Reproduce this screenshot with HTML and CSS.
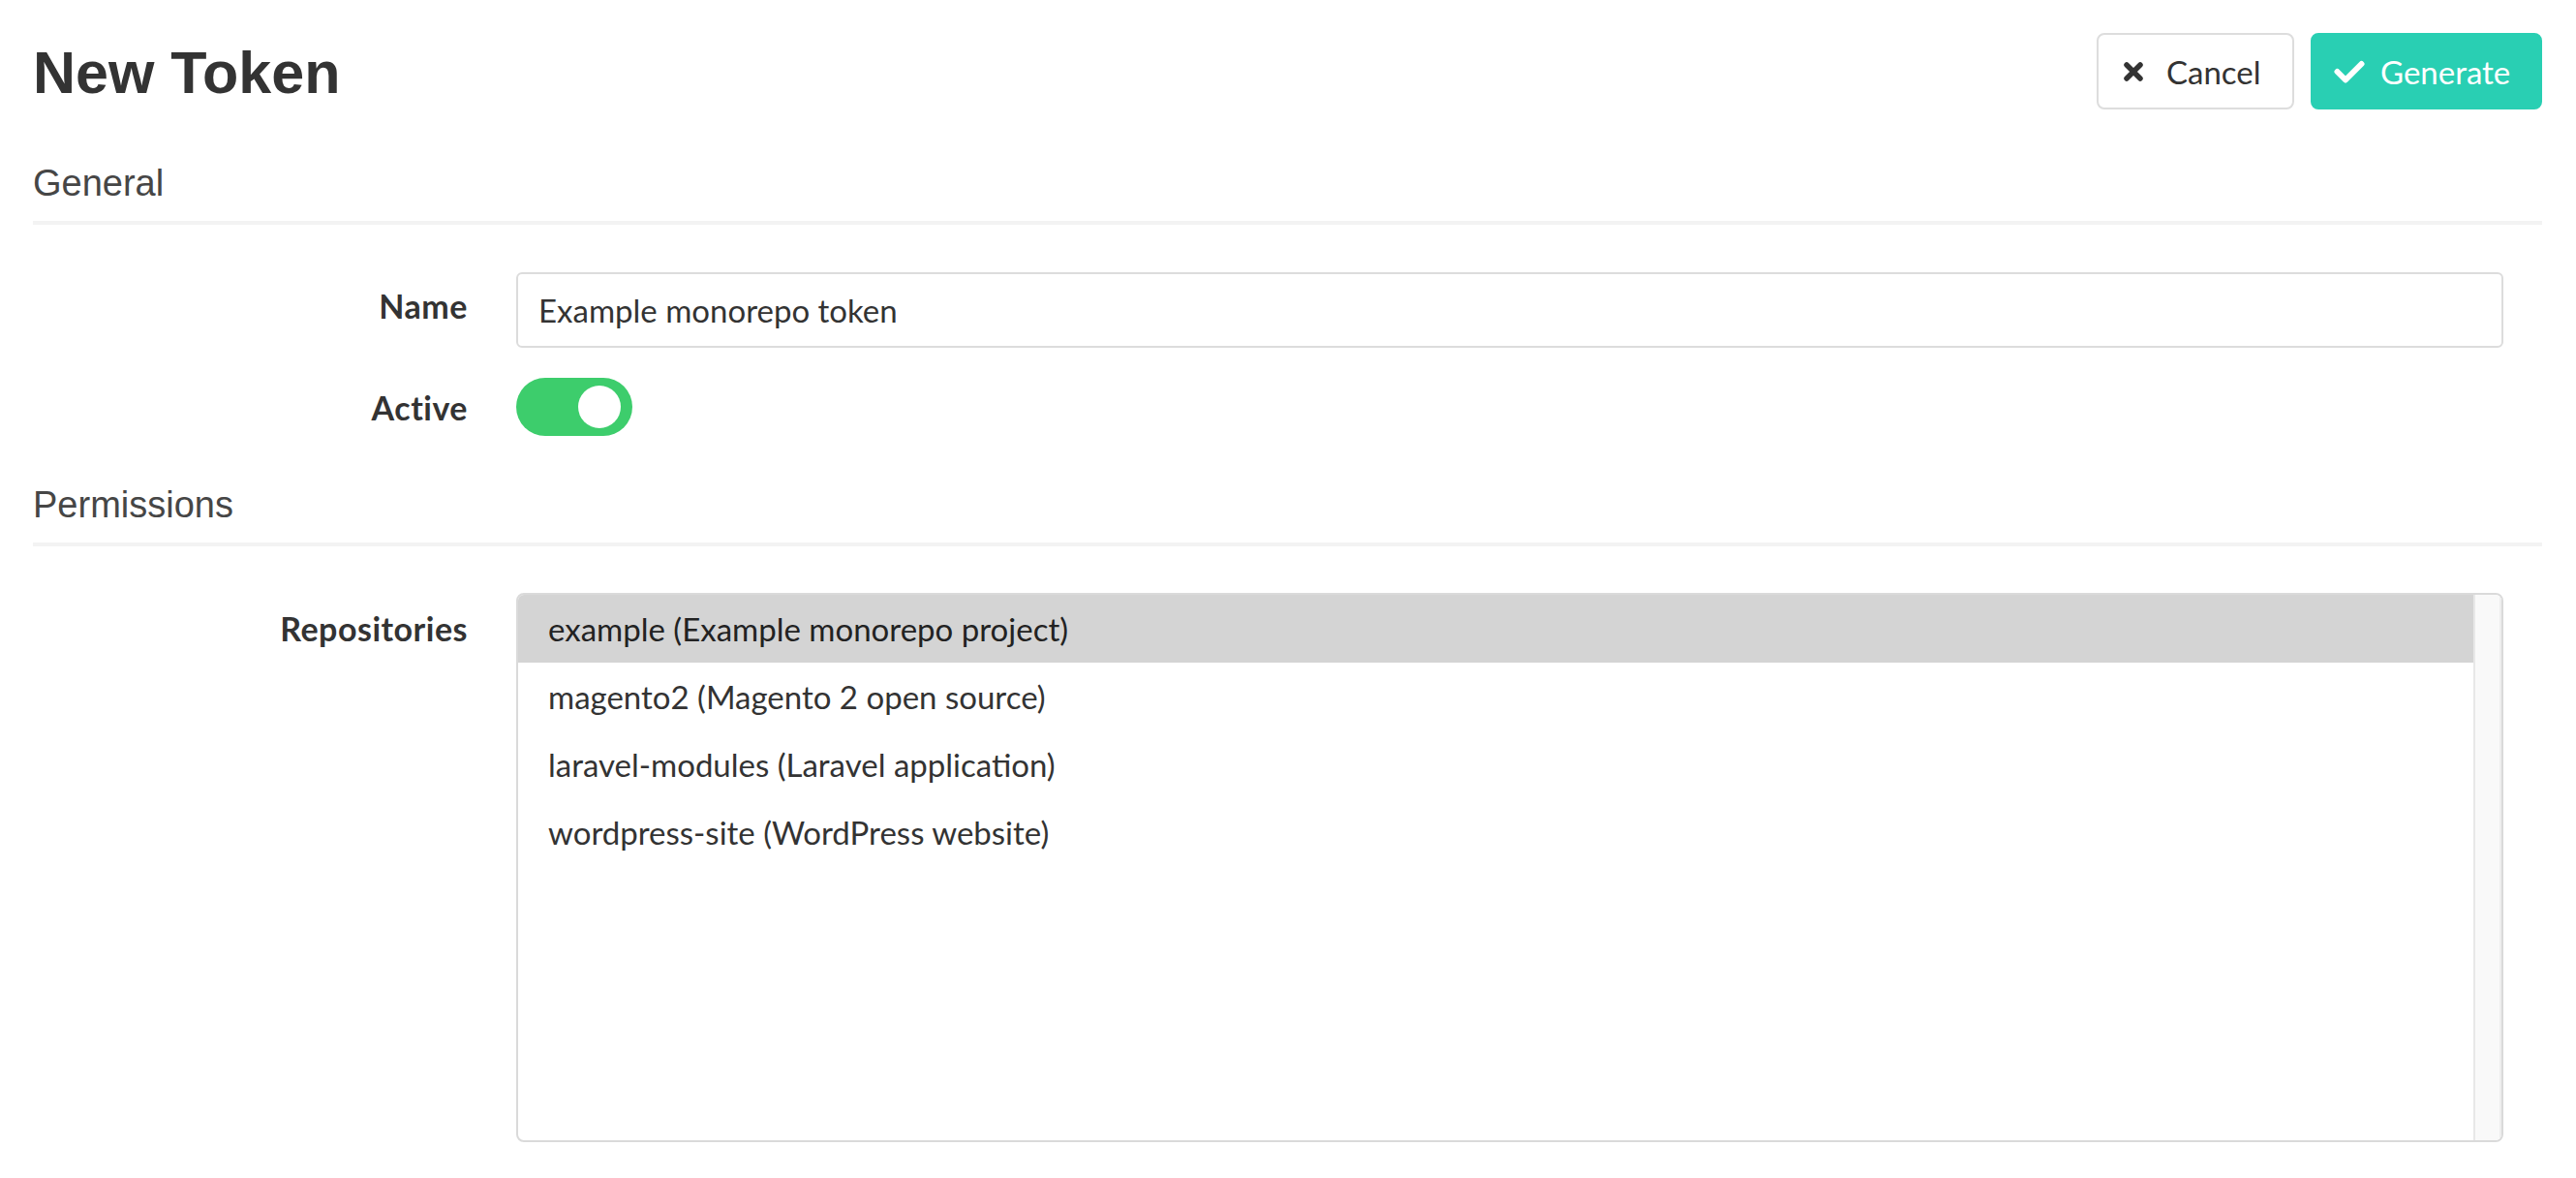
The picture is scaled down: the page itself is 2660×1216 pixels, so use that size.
FILE: index.html
```html
<!DOCTYPE html>
<html lang="en">
<head>
    <meta charset="UTF-8">
    <meta name="viewport" content="width=device-width, initial-scale=1.0">
    <title>New Token</title>
    <link rel="stylesheet" href="styles.css">
</head>
<body>
    <div class="page-header">
        <h1>New Token</h1>
        <div class="actions">
            <button class="btn btn-cancel">
                <svg width="22" height="22" viewBox="0 0 22 22"><path d="M4 4 L18 18 M18 4 L4 18" stroke="#333" stroke-width="5.5" stroke-linecap="round" fill="none"/></svg>
                Cancel
            </button>
            <button class="btn btn-generate">
                <svg width="32" height="24" viewBox="0 0 32 24"><polyline points="3.5,12 12,20.5 28.5,4" stroke="#fff" stroke-width="6" stroke-linecap="round" stroke-linejoin="round" fill="none"/></svg>
                Generate
            </button>
        </div>
    </div>

    <h2 class="section-title">General</h2>

    <div class="form-row first">
        <label class="form-label label-up">Name</label>
        <input class="form-input" type="text" value="Example monorepo token">
    </div>

    <div class="form-row">
        <label class="form-label">Active</label>
        <div class="toggle"><span class="knob"></span></div>
    </div>

    <h2 class="section-title permissions">Permissions</h2>

    <div class="form-row first top">
        <label class="form-label list-label">Repositories</label>
        <div class="listbox">
            <div class="options">
                <div class="option selected">example (Example monorepo project)</div>
                <div class="option">magento2 (Magento 2 open source)</div>
                <div class="option">laravel-modules (Laravel application)</div>
                <div class="option">wordpress-site (WordPress website)</div>
            </div>
            <div class="scroll-track"></div>
        </div>
    </div>
</body>
</html>
```

FILE: styles.css
```css
body {
    margin: 0;
    padding: 34px 35px 0 34px;
    background: #fff;
    color: #333;
    font-family: Lato, "Open Sans", sans-serif;
    font-size: 33px;
}
.page-header {
    display: flex;
    justify-content: space-between;
    align-items: center;
    height: 79px;
}
h1 {
    margin: 0;
    font-family: "Liberation Sans", Arial, sans-serif;
    font-size: 61px;
    line-height: 1;
    font-weight: bold;
    color: #333;
    padding-top: 3px;
}
.actions {
    display: flex;
    gap: 17px;
}
.btn {
    display: inline-flex;
    align-items: center;
    box-sizing: border-box;
    height: 79px;
    border: 2px solid #dddddd;
    border-radius: 8px;
    font-family: Lato, "Open Sans", sans-serif;
    font-size: 33px;
    cursor: pointer;
}
.btn-cancel {
    background: #fff;
    color: #333;
    width: 204px;
    padding: 0 0 0 25px;
    gap: 23px;
}
.btn-generate {
    background: #29cfb3;
    border-color: #29cfb3;
    color: #fff;
    width: 239px;
    padding: 0 0 0 22px;
    gap: 16px;
}
.section-title {
    margin: 57px 0 0;
    padding-bottom: 20px;
    border-bottom: 4px solid #f3f3f3;
    font-family: "Liberation Sans", Arial, sans-serif;
    font-size: 38px;
    line-height: 1;
    font-weight: normal;
    color: #464646;
}
.section-title.permissions {
    margin-top: 52px;
}
.form-row {
    display: grid;
    grid-template-columns: 449px 1fr;
    column-gap: 50px;
    align-items: center;
    padding-right: 40px;
    margin-top: 31px;
}
.form-row.first {
    margin-top: 49px;
}
.form-row.top {
    align-items: start;
    margin-top: 48px;
}
.form-label {
    text-align: right;
    font-size: 34px;
    letter-spacing: 0.5px;
    font-weight: bold;
    color: #333;
}
.label-up {
    padding-bottom: 9px;
}
.list-label {
    padding-top: 2px;
    line-height: 70px;
}
.form-input {
    box-sizing: border-box;
    width: 100%;
    height: 78px;
    border: 2px solid #dcdcdc;
    border-radius: 6px;
    padding: 0 21px;
    font-family: Lato, "Open Sans", sans-serif;
    font-size: 33px;
    color: #333;
    outline: none;
}
.toggle {
    display: flex;
    justify-content: flex-end;
    align-items: center;
    box-sizing: border-box;
    width: 120px;
    height: 60px;
    padding-right: 12px;
    border-radius: 30px;
    background: #3dcd6c;
}
.knob {
    width: 44px;
    height: 44px;
    border-radius: 50%;
    background: #fff;
}
.listbox {
    display: flex;
    box-sizing: border-box;
    height: 567px;
    border: 2px solid #dadada;
    border-radius: 8px;
    overflow: hidden;
}
.options {
    flex: 1;
}
.option {
    line-height: 70px;
    padding: 0 31px;
    color: #333;
}
.option.selected {
    background: #d4d4d4;
    color: #222;
}
.scroll-track {
    box-sizing: border-box;
    width: 29px;
    background: #f9f9f9;
    border-left: 2px solid #e8e8e8;
    border-right: 2px solid #eeeeee;
}
```
